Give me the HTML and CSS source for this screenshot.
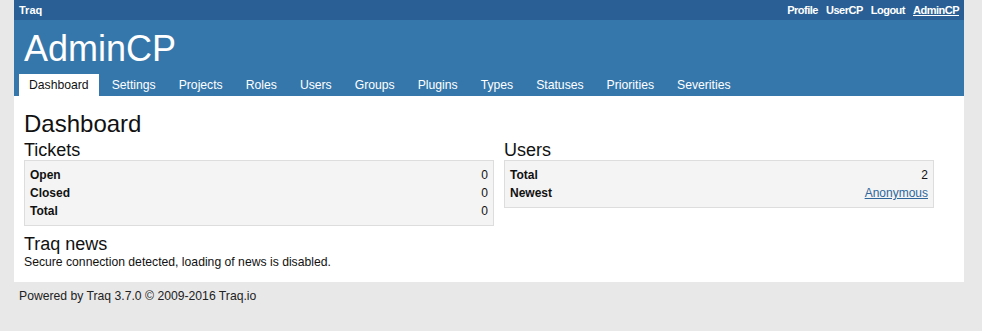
FILE: index.html
```html
<!DOCTYPE html>
<html lang="en">
<head>
  <meta charset="UTF-8" />
  <title>AdminCP - Traq</title>
  <link rel="stylesheet" href="styles.css">
</head>
<body>

<div class="wrapper">
  <div class="meta-nav">
    <a class="brand" href="#">Traq</a>
    <ul class="user-links">
      <li><a href="#">Profile</a></li>
      <li><a href="#">UserCP</a></li>
      <li><a href="#">Logout</a></li>
      <li><a href="#" class="current">AdminCP</a></li>
    </ul>
  </div>

  <div class="header">
    <h1>AdminCP</h1>
    <ul class="main-nav">
      <li class="active"><a href="#">Dashboard</a></li>
      <li><a href="#">Settings</a></li>
      <li><a href="#">Projects</a></li>
      <li><a href="#">Roles</a></li>
      <li><a href="#">Users</a></li>
      <li><a href="#">Groups</a></li>
      <li><a href="#">Plugins</a></li>
      <li><a href="#">Types</a></li>
      <li><a href="#">Statuses</a></li>
      <li><a href="#">Priorities</a></li>
      <li><a href="#">Severities</a></li>
    </ul>
  </div>

  <div class="content">
    <h2 class="page-title">Dashboard</h2>
    <div class="columns">
      <div class="col col-left">
        <h3>Tickets</h3>
        <table class="stats">
          <tr><th>Open</th><td>0</td></tr>
          <tr><th>Closed</th><td>0</td></tr>
          <tr><th>Total</th><td>0</td></tr>
        </table>
      </div>
      <div class="col col-right">
        <h3>Users</h3>
        <table class="stats">
          <tr><th>Total</th><td>2</td></tr>
          <tr><th>Newest</th><td><a href="#">Anonymous</a></td></tr>
        </table>
      </div>
    </div>
    <h3>Traq news</h3>
    <p class="news">Secure connection detected, loading of news is disabled.</p>
  </div>

  <div class="footer">Powered by Traq 3.7.0 &copy; 2009-2016 Traq.io</div>
</div>

</body>
</html>
```

FILE: styles.css
```css
body {
  margin: 0;
  background: #e8e8e8;
  font-family: "Liberation Sans", Arial, sans-serif;
  font-size: 12px;
  color: #111;
}
a {
  color: inherit;
  text-decoration: none;
}
ul {
  list-style: none;
  margin: 0;
  padding: 0;
}
.wrapper {
  width: 950px;
  margin-left: 14px;
}
.meta-nav {
  display: flex;
  justify-content: space-between;
  align-items: center;
  height: 20px;
  padding: 0 5px;
  background: #2a5f96;
  color: #fff;
  font-size: 11px;
  font-weight: bold;
}
.user-links {
  display: flex;
  gap: 8px;
  letter-spacing: -0.5px;
}
.user-links .current {
  text-decoration: underline;
}
.header {
  background: #3577ab;
  padding: 7px 5px 0;
}
.header h1 {
  margin: 0 0 0 5px;
  font-size: 36px;
  font-weight: normal;
  color: #fff;
  line-height: 43px;
}
.main-nav {
  display: flex;
  gap: 3px;
  margin-top: 4px;
}
.main-nav a {
  display: block;
  padding: 0 10px;
  line-height: 22px;
  font-size: 12.2px;
  color: #fff;
}
.main-nav .active a {
  background: #fff;
  color: #111;
}
.content {
  background: #fff;
  padding: 14px 10px 12px;
}
.page-title {
  margin: 0;
  font-size: 24px;
  font-weight: normal;
  line-height: 28px;
}
h3 {
  margin: 0;
  font-size: 18px;
  font-weight: normal;
  line-height: 20px;
}
.columns {
  display: flex;
  gap: 10px;
  margin-top: 2px;
  margin-bottom: 8px;
}
.col-left {
  width: 470px;
}
.col-right {
  width: 430px;
}
.stats {
  width: 100%;
  border-collapse: collapse;
  background: #f4f4f4;
  border: 1px solid #dddddd;
}
.stats th, .stats td {
  padding: 0 5px;
  line-height: 18px;
  font-size: 12px;
}
.stats th {
  text-align: left;
  font-weight: bold;
}
.stats td {
  text-align: right;
}
.stats tr:first-child th, .stats tr:first-child td {
  padding-top: 5px;
}
.stats tr:last-child th, .stats tr:last-child td {
  padding-bottom: 5px;
}
.stats td a {
  color: #2f679c;
  text-decoration: underline;
}
.news {
  margin: 0;
  line-height: 16px;
  font-size: 12.2px;
}
.footer {
  padding: 7px 5px;
  font-size: 12.2px;
  color: #222;
}
```
